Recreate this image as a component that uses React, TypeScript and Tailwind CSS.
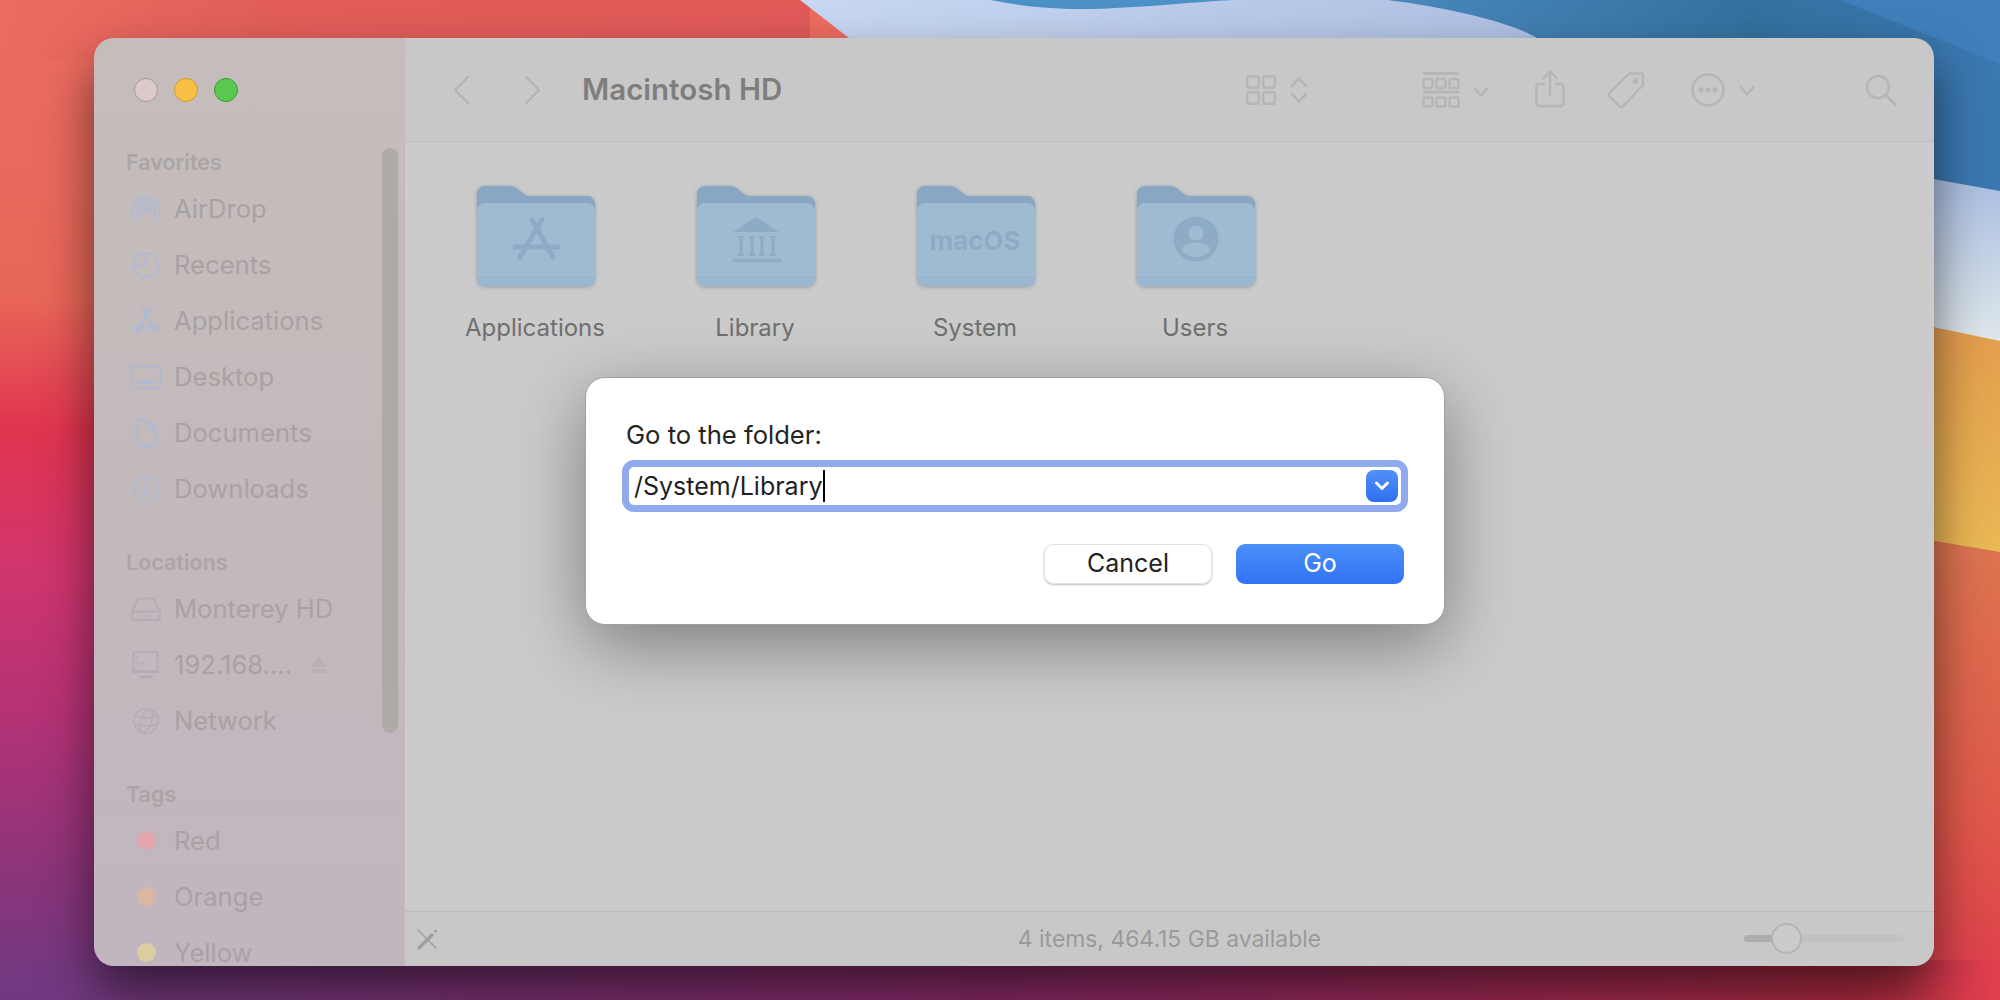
import React from "react";

function Wallpaper() {
  return (
    <svg className="absolute inset-0" width="2000" height="1000" viewBox="0 0 2000 1000">
      <defs>
        <linearGradient id="left" x1="0" y1="0" x2="0" y2="1">
          <stop offset="0" stopColor="#ec6c61" />
          <stop offset="0.3" stopColor="#e86658" />
          <stop offset="0.43" stopColor="#e0344f" />
          <stop offset="0.57" stopColor="#d0356d" />
          <stop offset="0.72" stopColor="#b33276" />
          <stop offset="0.88" stopColor="#8a347a" />
          <stop offset="1" stopColor="#6f3a82" />
        </linearGradient>
        <linearGradient id="topfade" x1="0" y1="0" x2="1" y2="0">
          <stop offset="0" stopColor="#e05a58" stopOpacity="0" />
          <stop offset="0.35" stopColor="#e05a58" stopOpacity="0.8" />
          <stop offset="1" stopColor="#e05a58" stopOpacity="1" />
        </linearGradient>
        <linearGradient id="bottom" x1="0" y1="0" x2="1" y2="0">
          <stop offset="0" stopColor="#6f3a82" stopOpacity="0" />
          <stop offset="0.05" stopColor="#74397f" />
          <stop offset="0.5" stopColor="#8a2a68" />
          <stop offset="0.75" stopColor="#a32a55" />
          <stop offset="0.93" stopColor="#b02c42" />
          <stop offset="1" stopColor="#e23f4e" />
        </linearGradient>
        <linearGradient id="lightband" x1="0" y1="0" x2="0" y2="1">
          <stop offset="0" stopColor="#a9bde2" />
          <stop offset="1" stopColor="#e0e8ea" />
        </linearGradient>
        <linearGradient id="orangeband" x1="0" y1="0" x2="0" y2="1">
          <stop offset="0" stopColor="#e39c4e" />
          <stop offset="1" stopColor="#eab955" />
        </linearGradient>
        <linearGradient id="coral" x1="0" y1="0" x2="0" y2="1">
          <stop offset="0" stopColor="#dc7550" />
          <stop offset="0.6" stopColor="#e0594a" />
          <stop offset="1" stopColor="#de3c4c" />
        </linearGradient>
        <linearGradient id="lightblue" x1="0" y1="0" x2="1" y2="0">
          <stop offset="0" stopColor="#c8d8f2" />
          <stop offset="1" stopColor="#aebfe2" />
        </linearGradient>
        <linearGradient id="blue" x1="0" y1="0" x2="1" y2="0">
          <stop offset="0" stopColor="#4a88bd" />
          <stop offset="0.6" stopColor="#35719f" />
          <stop offset="1" stopColor="#3b78b2" />
        </linearGradient>
      </defs>
      <rect width="2000" height="1000" fill="url(#left)" />
      <rect x="0" y="0" width="810" height="60" fill="url(#topfade)" />
      <path d="M1380 0H2000V200L1500 140Z" fill="url(#blue)" />
      <path d="M1840 0H2000V64Z" fill="#3f80bc" />
      <path d="M800 0H1388C1450 8 1510 22 1537 38L1560 100H860L849 38Z" fill="url(#lightblue)" />
      <path d="M990 0C1040 10 1085 10 1115 8C1170 6 1240 -4 1297 0Z" fill="#4b91c8" />
      <path d="M1900 173L2000 191V345L1900 320Z" fill="url(#lightband)" />
      <path d="M1900 320L2000 341V556L1900 535Z" fill="url(#orangeband)" />
      <path d="M1900 535L2000 552V1000H1900Z" fill="url(#coral)" />
      <rect x="0" y="960" width="2000" height="40" fill="url(#bottom)" />
    </svg>
  );
}

function SideIcon({ children }: { children: React.ReactNode }) {
  return (
    <svg width="32" height="32" viewBox="0 0 32 32" fill="none" stroke="#aebad3" strokeWidth="1.8" strokeLinecap="round" strokeLinejoin="round" className="shrink-0">
      {children}
    </svg>
  );
}

const AirDrop = (
  <SideIcon>
    <path d="M8 28A13.5 13.5 0 1 1 24 28" />
    <path d="M10.5 24A9.3 9.3 0 1 1 21.5 24" />
    <path d="M12.5 19.5A5 5 0 1 1 19.5 19.5" />
    <circle cx="16" cy="16" r="1.6" fill="#aebad3" />
  </SideIcon>
);
const Clock = (
  <SideIcon>
    <circle cx="16" cy="16" r="12.2" />
    <path d="M16 8.5V16.5H9.5" />
  </SideIcon>
);
const Apps = (
  <SideIcon>
    <path d="M19 3L7 27" strokeWidth="2.6" />
    <path d="M13 3L25 27" strokeWidth="2.6" />
    <path d="M3 22.5H29" strokeWidth="2.6" />
  </SideIcon>
);
const Desktop = (
  <SideIcon>
    <rect x="1.5" y="5" width="29" height="22" rx="2.5" />
    <path d="M7 21.5H25" strokeWidth="3" strokeLinecap="butt" />
  </SideIcon>
);
const Doc = (
  <SideIcon>
    <path d="M6.5 3H18L26.5 11.5V27.5C26.5 28.3 25.8 29 25 29H8C7.2 29 6.5 28.3 6.5 27.5Z" />
    <path d="M18 3V11.5H26.5" />
  </SideIcon>
);
const Download = (
  <SideIcon>
    <circle cx="16" cy="16" r="12.2" />
    <path d="M16 9V22M11 17.5L16 22.5L21 17.5" />
  </SideIcon>
);
const Disk = (
  <SideIcon>
    <path d="M8 5.5H24L30 19V24C30 25.7 28.7 27 27 27H5C3.3 27 2 25.7 2 24V19Z" stroke="#b1acb5" />
    <path d="M2.5 18.5H29.5" stroke="#b1acb5" />
    <path d="M11 23H21" stroke="#b1acb5" strokeDasharray="1.4 1.4" strokeLinecap="butt" strokeWidth="2.6" />
  </SideIcon>
);
const Computer = (
  <SideIcon>
    <rect x="3.5" y="3" width="24" height="19" rx="1.5" stroke="#b1acb5" />
    <path d="M7 7V12M7 14H15M7 17H11" stroke="#b1acb5" strokeWidth="1.1" />
    <path d="M3.5 22.5H27.5" stroke="#b1acb5" strokeWidth="3" />
    <path d="M10 28H22" stroke="#b1acb5" strokeWidth="2.6" />
  </SideIcon>
);
const Globe = (
  <SideIcon>
    <g stroke="#b1acb5" strokeWidth="1.4">
      <circle cx="16" cy="16" r="12.2" />
      <ellipse cx="16" cy="16" rx="5.5" ry="12.2" transform="rotate(20 16 16)" />
      <path d="M5 10.5C11 14 21 14 27 10.5M4 18.5C11 22 21 22 28 18.5" />
    </g>
  </SideIcon>
);

function Tag({ color }: { color: string }) {
  return (
    <div className="w-8 h-8 shrink-0 flex items-center justify-center">
      <div className={`w-[19px] h-[19px] rounded-full ${color}`} />
    </div>
  );
}

function Row({ icon, label, extra }: { icon: React.ReactNode; label: string; extra?: React.ReactNode }) {
  return (
    <div className="h-14 flex items-center shrink-0">
      <div className="w-[44px] shrink-0 flex">{icon}</div>
      <span className="text-[25.6px] leading-none text-[#a8a2a5]">{label}</span>
      {extra}
    </div>
  );
}

function Heading({ label, className }: { label: string; className: string }) {
  return <div className={`text-[21.5px] leading-none font-semibold text-[#aba5a5] ${className}`}>{label}</div>;
}

function Sidebar() {
  return (
    <div className="relative w-[311px] h-full shrink-0 overflow-hidden bg-gradient-to-b from-[#c5bdbb] via-[#c3b9bb] to-[#c1b5c0] border-r border-[#c0bcbc]">
      <div className="flex items-center gap-4 pl-[40px] pt-[40px]">
        <div className="w-6 h-6 rounded-full bg-[#dccac8] border border-[#a89a98]" />
        <div className="w-6 h-6 rounded-full bg-[#f7bf45] border border-[#d19d30]" />
        <div className="w-6 h-6 rounded-full bg-[#5bc74f] border border-[#3a9c33]" />
      </div>
      <div className="flex flex-col pl-[36px] pr-3">
        <Heading label="Favorites" className="mt-[50px] mb-[7px] ml-[-4px]" />
        <Row icon={AirDrop} label="AirDrop" />
        <Row icon={Clock} label="Recents" />
        <Row icon={Apps} label="Applications" />
        <Row icon={Desktop} label="Desktop" />
        <Row icon={Doc} label="Documents" />
        <Row icon={Download} label="Downloads" />
        <Heading label="Locations" className="mt-[35px] mb-[8px] ml-[-4px]" />
        <Row icon={Disk} label="Monterey HD" />
        <Row
          icon={Computer}
          label="192.168...."
          extra={
            <svg width="18" height="18" viewBox="0 0 18 18" className="ml-[18px]" fill="#b8b0b3">
              <path d="M9 1L17 11H1Z" />
              <rect x="1" y="13" width="16" height="4" />
            </svg>
          }
        />
        <Row icon={Globe} label="Network" />
        <Heading label="Tags" className="mt-[35px] mb-[7px] ml-[-4px]" />
        <Row icon={<Tag color="bg-[#e2a8ae]" />} label="Red" />
        <Row icon={<Tag color="bg-[#dcb7a0]" />} label="Orange" />
        <Row icon={<Tag color="bg-[#dccca0]" />} label="Yellow" />
      </div>
      <div className="absolute left-[288px] top-[110px] w-4 h-[585px] rounded-full bg-[#adaaa8]" />
    </div>
  );
}

function ToolIcon({ w, h, children, className }: { w: number; h: number; children: React.ReactNode; className?: string }) {
  return (
    <svg width={w} height={h} viewBox={`0 0 ${w} ${h}`} fill="none" stroke="#b7b5b5" strokeWidth="2.4" strokeLinecap="round" strokeLinejoin="round" className={`shrink-0 ${className ?? ""}`}>
      {children}
    </svg>
  );
}

function Toolbar() {
  return (
    <div className="h-[104px] shrink-0 flex items-center bg-[#c9c8c8] border-b border-[#bdbcbc]">
      <ToolIcon w={18} h={30} className="ml-[47px]"><path d="M16 2L3 15L16 28" stroke="#b5b3b3" /></ToolIcon>
      <ToolIcon w={18} h={30} className="ml-[53px]"><path d="M3 2L16 15L3 28" stroke="#b5b3b3" /></ToolIcon>
      <span className="ml-[41px] text-[29.5px] leading-none font-semibold text-[#7f7e7e]">Macintosh HD</span>
      <ToolIcon w={30} h={30} className="ml-[464px]">
        <rect x="1.2" y="1.2" width="11.5" height="11.5" rx="1.5" />
        <rect x="17.3" y="1.2" width="11.5" height="11.5" rx="1.5" />
        <rect x="1.2" y="17.3" width="11.5" height="11.5" rx="1.5" />
        <rect x="17.3" y="17.3" width="11.5" height="11.5" rx="1.5" />
      </ToolIcon>
      <ToolIcon w={18} h={30} className="ml-[14px]">
        <path d="M2 11L9 3.5L16 11M2 19L9 26.5L16 19" strokeWidth="2.6" />
      </ToolIcon>
      <ToolIcon w={38} h={36} className="ml-[114px]">
        <path d="M1 1.5H37M1 20H37" strokeWidth="2.8" strokeLinecap="butt" />
        <rect x="1.5" y="7" width="9" height="9" rx="1.5" />
        <rect x="14.5" y="7" width="9" height="9" rx="1.5" />
        <rect x="27.5" y="7" width="9" height="9" rx="1.5" />
        <rect x="1.5" y="25.5" width="9" height="9" rx="1.5" />
        <rect x="14.5" y="25.5" width="9" height="9" rx="1.5" />
        <rect x="27.5" y="25.5" width="9" height="9" rx="1.5" />
      </ToolIcon>
      <ToolIcon w={16} h={12} className="ml-[13px] mt-[4px]"><path d="M2 2.5L8 9.5L14 2.5" strokeWidth="2.6" /></ToolIcon>
      <ToolIcon w={30} h={38} className="ml-[46px] mb-[2px]">
        <path d="M9 14H4C2.5 14 1.5 15 1.5 16.5V33.5C1.5 35 2.5 36 4 36H26C27.5 36 28.5 35 28.5 33.5V16.5C28.5 15 27.5 14 26 14H21" />
        <path d="M15 25V2M8.5 8L15 1.5L21.5 8" />
      </ToolIcon>
      <ToolIcon w={38} h={38} className="ml-[42px]">
        <path d="M22 2.5H34C35 2.5 36 3.5 36 4.5V14L16 35.5C15 36.5 13.5 36.5 12.5 35.5L2.5 25.5C1.5 24.5 1.5 23 2.5 22Z" />
        <circle cx="28.5" cy="10" r="1.5" fill="#b7b5b5" />
      </ToolIcon>
      <ToolIcon w={34} h={34} className="ml-[46px]">
        <circle cx="17" cy="17" r="15.5" />
        <circle cx="10" cy="17" r="1.3" fill="#b7b5b5" />
        <circle cx="17" cy="17" r="1.3" fill="#b7b5b5" />
        <circle cx="24" cy="17" r="1.3" fill="#b7b5b5" />
      </ToolIcon>
      <ToolIcon w={16} h={12} className="ml-[14px] mt-[2px]"><path d="M2 2.5L8 9.5L14 2.5" strokeWidth="2.6" /></ToolIcon>
      <ToolIcon w={32} h={32} className="ml-[110px]">
        <circle cx="13" cy="13" r="11" strokeWidth="2.6" />
        <path d="M21 21L30 30.5" strokeWidth="3" />
      </ToolIcon>
    </div>
  );
}

function Folder({ label, badge }: { label: string; badge: React.ReactNode }) {
  return (
    <div className="w-[220px] shrink-0 flex flex-col items-center">
      <div className="relative w-[118px] h-[100px] drop-shadow-[0_1px_2px_rgba(90,110,130,0.5)]">
        <svg width="118" height="100" viewBox="0 0 118 100" className="absolute inset-0">
          <path d="M8 0H33C36 0 38 1 40 2.5L46 7.5C48 9 50 10 53 10H110C114.5 10 118 13.5 118 18V40H0V8C0 3.5 3.5 0 8 0Z" fill="#89a6c2" />
          <path d="M8 17H110C114.5 17 118 20.5 118 25V92C118 96.5 114.5 100 110 100H8C3.5 100 0 96.5 0 92V25C0 20.5 3.5 17 8 17Z" fill="#9fbbd1" />
          <path d="M0 89H118V92C118 96.5 114.5 100 110 100H8C3.5 100 0 96.5 0 92Z" fill="#9ab7cf" />
          <path d="M0 89H118" stroke="#a6c0d5" strokeWidth="1" />
        </svg>
        {badge}
      </div>
      <div className="mt-[28px] pr-[2px] text-[24px] leading-[28px] text-[#706f6f]">{label}</div>
    </div>
  );
}

const badgeColor = "#8dabc5";

const AppBadge = (
  <svg width="118" height="100" viewBox="0 0 118 100" className="absolute inset-0" stroke={badgeColor} strokeLinecap="round" fill="none">
    <path d="M65 34L43 71" strokeWidth="5" />
    <path d="M55 34L76 71" strokeWidth="5" />
    <path d="M38 61H81" strokeWidth="5" />
  </svg>
);
const LibBadge = (
  <svg width="118" height="100" viewBox="0 0 118 100" className="absolute inset-0" fill={badgeColor}>
    <path d="M59 31L82 46H36Z" />
    <path d="M37 74.5H83" stroke={badgeColor} strokeWidth="3.5" strokeLinecap="round" />
    <path d="M41 50H47V52H45.5V68H47V70H41V68H42.5V52H41ZM52 50H58V52H56.5V68H58V70H52V68H53.5V52H52ZM62 50H68V52H66.5V68H68V70H62V68H63.5V52H62ZM73 50H79V52H77.5V68H79V70H73V68H74.5V52H73Z" />
  </svg>
);
const UserBadge = (
  <svg width="118" height="100" viewBox="0 0 118 100" className="absolute inset-0">
    <circle cx="59" cy="53" r="22.5" fill={badgeColor} />
    <circle cx="59" cy="47" r="7.5" fill="#a0bcd2" />
    <path d="M44.5 64C46 58.5 52 56.5 59 56.5C66 56.5 72 58.5 73.5 64C70 68.5 65 71 59 71C53 71 48 68.5 44.5 64Z" fill="#a0bcd2" />
  </svg>
);
const OsBadge = (
  <div className="absolute inset-x-0 top-[41px] pr-[2px] text-center text-[26px] leading-[28px] font-bold text-[#8dabc5]">macOS</div>
);

function Dialog() {
  return (
    <div className="absolute left-[585px] top-[377px] w-[860px] h-[248px] rounded-[20px] bg-white border border-[#a0a0a0] shadow-[0_20px_70px_rgba(0,0,0,0.38)] px-[36px] pt-[42px] flex flex-col">
      <div className="pl-[4px] text-[25.6px] leading-[30px] text-[#242424]">Go to the folder:</div>
      <div className="mt-[10px] h-[52px] rounded-[12px] border-[7px] border-[#8fabee] bg-white flex items-center justify-between pl-[5px] pr-[3px]">
        <div className="flex items-center h-[33px]">
          <span className="text-[25px] leading-none text-[#1f1f1f]">/System/Library</span>
          <span className="w-[2px] h-[32px] bg-black" />
        </div>
        <div className="w-8 h-8 rounded-[8px] bg-gradient-to-b from-[#5190f7] to-[#2f6ff0] flex items-center justify-center">
          <svg width="16" height="12" viewBox="0 0 16 12" fill="none" stroke="white" strokeWidth="3" strokeLinecap="round" strokeLinejoin="round">
            <path d="M2.5 3L8 8.5L13.5 3" />
          </svg>
        </div>
      </div>
      <div className="mt-[32px] flex justify-end gap-[24px] pr-[4px]">
        <button className="w-[168px] h-10 rounded-[9px] bg-white border border-[#e2e2e2] shadow-[0_1px_2px_rgba(0,0,0,0.25)] text-[25px] leading-none text-[#222] pb-[1px]">Cancel</button>
        <button className="w-[168px] h-10 rounded-[9px] bg-gradient-to-b from-[#4a8ff8] to-[#3372f5] text-[25px] leading-none text-white pb-[1px]">Go</button>
      </div>
    </div>
  );
}

export default function App() {
  return (
    <div className="relative w-[2000px] h-[1000px] overflow-hidden pl-[94px] pt-[38px] font-['Inter','Liberation_Sans',sans-serif]">
      <Wallpaper />
      <div className="relative flex w-[1840px] h-[928px] rounded-[20px] overflow-hidden shadow-[0_26px_50px_rgba(0,0,0,0.55)]">
        <Sidebar />
        <div className="flex-1 flex flex-col min-w-0">
          <Toolbar />
          <div className="flex-1 bg-[#cbcbcb] flex items-start pl-[21px] pt-[44px]">
            <Folder label="Applications" badge={AppBadge} />
            <Folder label="Library" badge={LibBadge} />
            <Folder label="System" badge={OsBadge} />
            <Folder label="Users" badge={UserBadge} />
          </div>
          <div className="relative h-[55px] shrink-0 bg-[#c9c8c8] border-t border-[#bdbcbc] flex items-center justify-center">
            <svg width="22" height="22" viewBox="0 0 22 22" className="absolute left-[11px] top-[16px]" fill="none" stroke="#a09f9f" strokeLinecap="round">
              <path d="M2 2L20 20" strokeWidth="1.4" />
              <path d="M16 7L3 20" strokeWidth="3.5" />
              <circle cx="19.5" cy="3" r="1.6" fill="#a09f9f" stroke="none" />
            </svg>
            <span className="text-[22.9px] leading-none text-[#9b9a9a]">4 items, 464.15 GB available</span>
            <div className="absolute left-[1339px] top-[23px] w-[160px] h-[7px] rounded-full bg-[#c2c1c1]">
              <div className="h-full w-[34px] rounded-l-full bg-[#aeadad]" />
            </div>
            <div className="absolute left-[1366px] top-[11px] w-[31px] h-[31px] rounded-full bg-[#cbcbcb] border-2 border-[#b5b4b4]" />
          </div>
        </div>
      </div>
      <Dialog />
    </div>
  );
}
